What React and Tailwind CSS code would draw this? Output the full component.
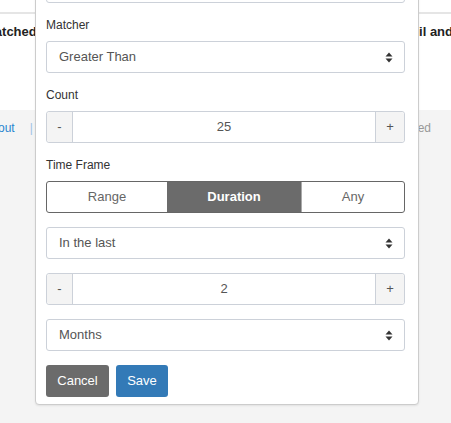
import React from 'react'

const font = { fontFamily: '"Liberation Sans", Arial, sans-serif' }

function SortIcon() {
  return (
    <svg width="8" height="11" viewBox="0 0 8 11" className="text-[#333]">
      <path d="M4 0.5 L7.5 4.5 L0.5 4.5 Z" fill="currentColor" />
      <path d="M4 10.5 L7.5 6.5 L0.5 6.5 Z" fill="currentColor" />
    </svg>
  )
}

function Select({ value }) {
  return (
    <div className="h-[32px] flex items-center justify-between pl-[12px] pr-[11px] border border-[#ccd1d9] rounded-[3px] bg-white text-[13px] text-[#555]">
      <span>{value}</span>
      <SortIcon />
    </div>
  )
}

function Stepper({ value }) {
  return (
    <div className="h-[32px] flex border border-[#ccd1d9] rounded-[3px] bg-white text-[13px] text-[#555]">
      <div className="w-[26px] flex items-center justify-center bg-[#f4f4f4] border-r border-[#ccd1d9] rounded-l-[3px]">-</div>
      <div className="flex-1 flex items-center justify-center">{value}</div>
      <div className="w-[29px] flex items-center justify-center bg-[#f4f4f4] border-l border-[#ccd1d9] rounded-r-[3px]">+</div>
    </div>
  )
}

function Label({ children }) {
  return <div className="mt-[15px] mb-[9px] text-[12px] text-[#333] leading-[14px]">{children}</div>
}

export default function App() {
  return (
    <div className="relative w-[451px] h-[423px] overflow-hidden bg-[#f4f4f4]" style={font}>
      {/* page behind the popover */}
      <div className="bg-white h-[110px] pt-[12px]">
        <div className="border-t-2 border-[#e5e5e5] flex justify-between pt-[10px] text-[13px] font-bold text-[#222] leading-[15px]">
          <span className="-ml-[16px]">Matched</span>
          <span className="whitespace-nowrap -mr-[2px]">il and</span>
        </div>
      </div>
      <div className="flex justify-between items-center pt-[9px] text-[12px]">
        <div className="flex items-center gap-[15px] -ml-[2px]">
          <span className="text-[#2a87d0]">out</span>
          <span className="text-[#9cc3e6]">|</span>
        </div>
        <span className="text-[#999] whitespace-nowrap pr-[20px]">red</span>
      </div>

      {/* popover */}
      <div className="absolute left-[35px] top-[-40px] w-[384px] bg-white border border-[#ccc] rounded-[4px] pl-[10px] pr-[13px] pt-[10px] pb-[7px] shadow-[0_1px_2px_rgba(0,0,0,0.08)]">
        <div className="h-[32px] border border-[#ccd1d9] rounded-[3px]" />
        <Label>Matcher</Label>
        <Select value="Greater Than" />
        <Label>Count</Label>
        <Stepper value="25" />
        <Label>Time Frame</Label>
        <div className="h-[32px] flex border border-[#666] rounded-[3px] text-[13px] overflow-hidden">
          <div className="w-[120px] flex items-center justify-center text-[#666]">Range</div>
          <div className="w-[134px] flex items-center justify-center bg-[#6b6b6b] text-white font-bold">Duration</div>
          <div className="flex-1 flex items-center justify-center text-[#666] border-l border-[#aaa]">Any</div>
        </div>
        <div className="mt-[14px]"><Select value="In the last" /></div>
        <div className="mt-[14px]"><Stepper value="2" /></div>
        <div className="mt-[14px]"><Select value="Months" /></div>
        <div className="mt-[14px] flex gap-[7px]">
          <button className="h-[32px] w-[63px] rounded-[3px] bg-[#6b6b6b] text-white text-[13px]">Cancel</button>
          <button className="h-[32px] w-[52px] rounded-[3px] bg-[#337ab7] text-white text-[13px]">Save</button>
        </div>
      </div>
    </div>
  )
}
